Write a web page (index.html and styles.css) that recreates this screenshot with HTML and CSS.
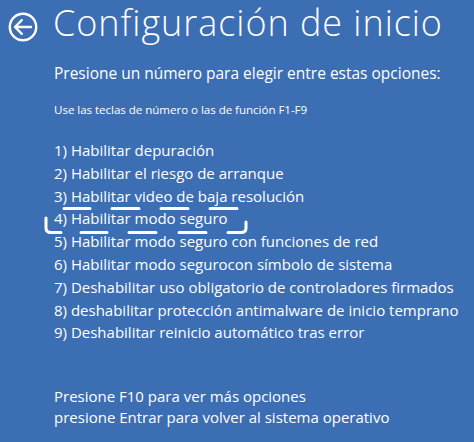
FILE: index.html
```html
<!DOCTYPE html>
<html lang="es">
<head>
<meta charset="utf-8">
<title>Configuración de inicio</title>
<link rel="stylesheet" href="styles.css">
</head>
<body>
<div class="screen">
  <header class="header">
    <svg class="back" width="30" height="30" viewBox="0 0 30 30" aria-hidden="true">
      <circle cx="15" cy="15" r="13.2" fill="none" stroke="#fff" stroke-width="2.4"/>
      <path d="M23 15H7M13.8 8.2L7 15L13.8 21.8" fill="none" stroke="#fff" stroke-width="2.4" stroke-linecap="round" stroke-linejoin="round"/>
    </svg>
    <h1 class="title">Configuración de inicio</h1>
  </header>
  <main class="content">
    <p class="lead">Presione un número para elegir entre estas opciones:</p>
    <p class="hint">Use las teclas de número o las de función F1-F9</p>
    <ol class="options">
      <li>1) Habilitar depuración</li>
      <li>2) Habilitar el riesgo de arranque</li>
      <li>3) Habilitar video de baja resolución</li>
      <li>4) Habilitar modo seguro</li>
      <li>5) Habilitar modo seguro con funciones de red</li>
      <li>6) Habilitar modo segurocon símbolo de sistema</li>
      <li>7) Deshabilitar uso obligatorio de controladores firmados</li>
      <li>8) deshabilitar protección antimalware de inicio temprano</li>
      <li>9) Deshabilitar reinicio automático tras error</li>
    </ol>
    <div class="footer">
      <p>Presione F10 para ver más opciones</p>
      <p>presione Entrar para volver al sistema operativo</p>
    </div>
  </main>
  <svg class="mark" width="474" height="442" viewBox="0 0 474 442" aria-hidden="true">
    <g fill="none" stroke="#fff" stroke-width="3" stroke-linecap="round" stroke-linejoin="round">
      <path d="M64 208.5H90M112 208.5H139M161 208.5H188M210 208.5H237"/>
      <path d="M46 218V228Q46 232.5 51 232.5H61"/>
      <path d="M81 232.5H107M129 232.5H156M179 232.5H206"/>
      <path d="M228 232.5H241Q246 232.5 246 228V222"/>
    </g>
  </svg>
</div>
</body>
</html>
```
FILE: styles.css
```css
html, body {
  margin: 0;
  padding: 0;
}
body {
  background: #3c6eb4;
  color: #fff;
  font-family: "Open Sans", "Noto Sans", sans-serif;
}
.screen {
  position: relative;
  width: 474px;
  height: 442px;
  overflow: hidden;
  background: #3c6eb4;
}
.header {
  display: flex;
  align-items: flex-start;
  gap: 15px;
  padding-left: 8px;
  padding-top: 3px;
  height: 41px;
}
.back {
  flex: none;
  margin-top: 9px;
}
.title {
  margin: 0;
  font-size: 36px;
  line-height: 40px;
  font-weight: 300;
  letter-spacing: 0.95px;
  white-space: nowrap;
}
.content {
  padding-left: 54px;
  white-space: nowrap;
}
.lead {
  margin: 18px 0 0;
  font-size: 15.5px;
  line-height: 22px;
}
.hint {
  margin: 18px 0 0;
  font-size: 11.6px;
  line-height: 16px;
  letter-spacing: -0.05px;
}
.options {
  list-style: none;
  margin: 21px 0 0;
  padding: 0;
  font-size: 15px;
  line-height: 22.8px;
}
.footer {
  margin-top: 42px;
  font-size: 15px;
  line-height: 21px;
}
.footer p {
  margin: 0;
}
.mark {
  position: absolute;
  left: 0;
  top: 0;
  pointer-events: none;
}
```
